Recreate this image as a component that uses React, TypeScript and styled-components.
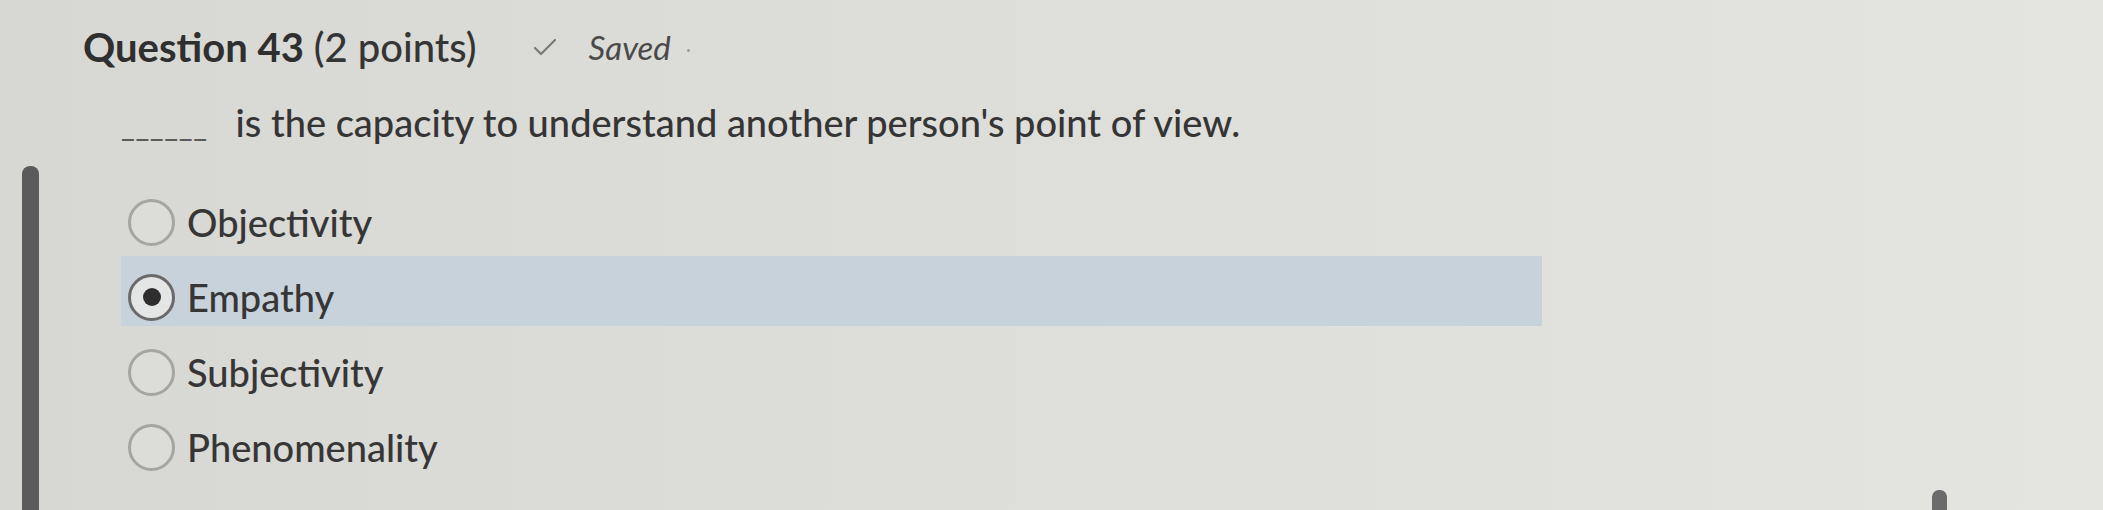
import React from 'react';
import styled, { createGlobalStyle } from 'styled-components';

const GlobalStyle = createGlobalStyle`
  html, body {
    margin: 0;
    padding: 0;
  }
  body {
    width: 2103px;
    height: 510px;
    overflow: hidden;
    font-family: Lato, "Open Sans", "Liberation Sans", sans-serif;
    color: #353535;
    background: linear-gradient(90deg, #d7d7d3 0%, #dcdcd8 35%, #e0e0dc 70%, #e4e4e0 100%);
  }
`;

const options = ['Objectivity', 'Empathy', 'Subjectivity', 'Phenomenality'];
const selected = 1;

const App = () => {
  return (
    <>
      <GlobalStyle />
      <Page>
        <Header>
          <Title>
            Question 43 <Points>(2 points)</Points>
          </Title>
          <SavedState>
            <CheckIcon viewBox="0 0 24 18">
              <path d="M2 10 L8 16 L22 2" />
            </CheckIcon>
            <SavedText>Saved</SavedText>
            <Dot />
          </SavedState>
        </Header>
        <Prompt>
          <Blank>______</Blank>
          is the capacity to understand another person's point of view.
        </Prompt>
        <Body>
          <SideBar />
          <AnswerList>
            {options.map((opt, i) => (
              <AnswerRow key={opt} active={i === selected}>
                <Radio checked={i === selected} />
                <Label>{opt}</Label>
              </AnswerRow>
            ))}
          </AnswerList>
        </Body>
        <CornerMark />
      </Page>
    </>
  );
};

const Page = styled.div`
  position: relative;
  height: 510px;
  display: flex;
  flex-direction: column;
`;

const Header = styled.div`
  display: flex;
  align-items: center;
  padding: 22px 0 0 83px;
  height: 50px;
`;

const Title = styled.h2`
  margin: 0;
  font-size: 40px;
  font-weight: 700;
  color: #2f2f2f;
`;

const Points = styled.span`
  font-weight: 500;
  color: #353535;
`;

const SavedState = styled.div`
  display: flex;
  align-items: center;
  margin-left: 56px;
`;

const CheckIcon = styled.svg`
  width: 24px;
  height: 18px;
  fill: none;
  stroke: #7a7a7a;
  stroke-width: 2.2;
  stroke-linecap: round;
  stroke-linejoin: round;
`;

const SavedText = styled.span`
  margin-left: 32px;
  font-size: 33px;
  font-style: italic;
  color: #4a4a4a;
`;

const Dot = styled.span`
  width: 3px;
  height: 3px;
  border-radius: 50%;
  background: #9a9a9a;
  margin-left: 16px;
  margin-top: 6px;
`;

const Prompt = styled.div`
  display: flex;
  align-items: baseline;
  padding: 27px 0 0 121px;
  font-size: 38px;
  font-weight: 500;
  color: #353535;
`;

const Blank = styled.span`
  white-space: nowrap;
  font-size: 30px;
  letter-spacing: 0.6px;
  color: #5a5a5a;
  margin-right: 28px;
`;

const Body = styled.div`
  flex: 1;
  display: flex;
  margin-top: 21px;
`;

const SideBar = styled.div`
  width: 17px;
  margin-left: 22px;
  border-radius: 8px 8px 0 0;
  background: #5a5b5a;
`;

const AnswerList = styled.div`
  display: flex;
  flex-direction: column;
  gap: 5px;
  margin-left: 82px;
  padding-top: 15px;
`;

const AnswerRow = styled.div<{ active?: boolean }>`
  display: flex;
  align-items: center;
  width: 1421px;
  height: 70px;
  padding: 12px 0 0 7px;
  box-sizing: border-box;
  background: ${p => (p.active ? '#c8d2da' : 'transparent')};
`;

const Radio = styled.span<{ checked?: boolean }>`
  position: relative;
  width: 47px;
  height: 47px;
  box-sizing: border-box;
  border-radius: 50%;
  border: ${p => (p.checked ? '3px solid #6a6a6a' : '3px solid #a5a5a3')};
  background: ${p => (p.checked ? '#e4e6e6' : '#dcdcd9')};
  flex-shrink: 0;

  &::after {
    content: '';
    display: ${p => (p.checked ? 'block' : 'none')};
    position: absolute;
    left: 50%;
    top: 50%;
    width: 18px;
    height: 18px;
    margin: -9px 0 0 -9px;
    border-radius: 50%;
    background: #2e2e2e;
  }
`;

const Label = styled.span`
  margin-left: 12px;
  font-size: 38px;
  font-weight: 500;
  color: #363636;
`;

const CornerMark = styled.div`
  position: absolute;
  left: 1932px;
  bottom: 0;
  width: 15px;
  height: 20px;
  border-radius: 7px 7px 0 0;
  background: #6a6b6a;
`;

export default App;
